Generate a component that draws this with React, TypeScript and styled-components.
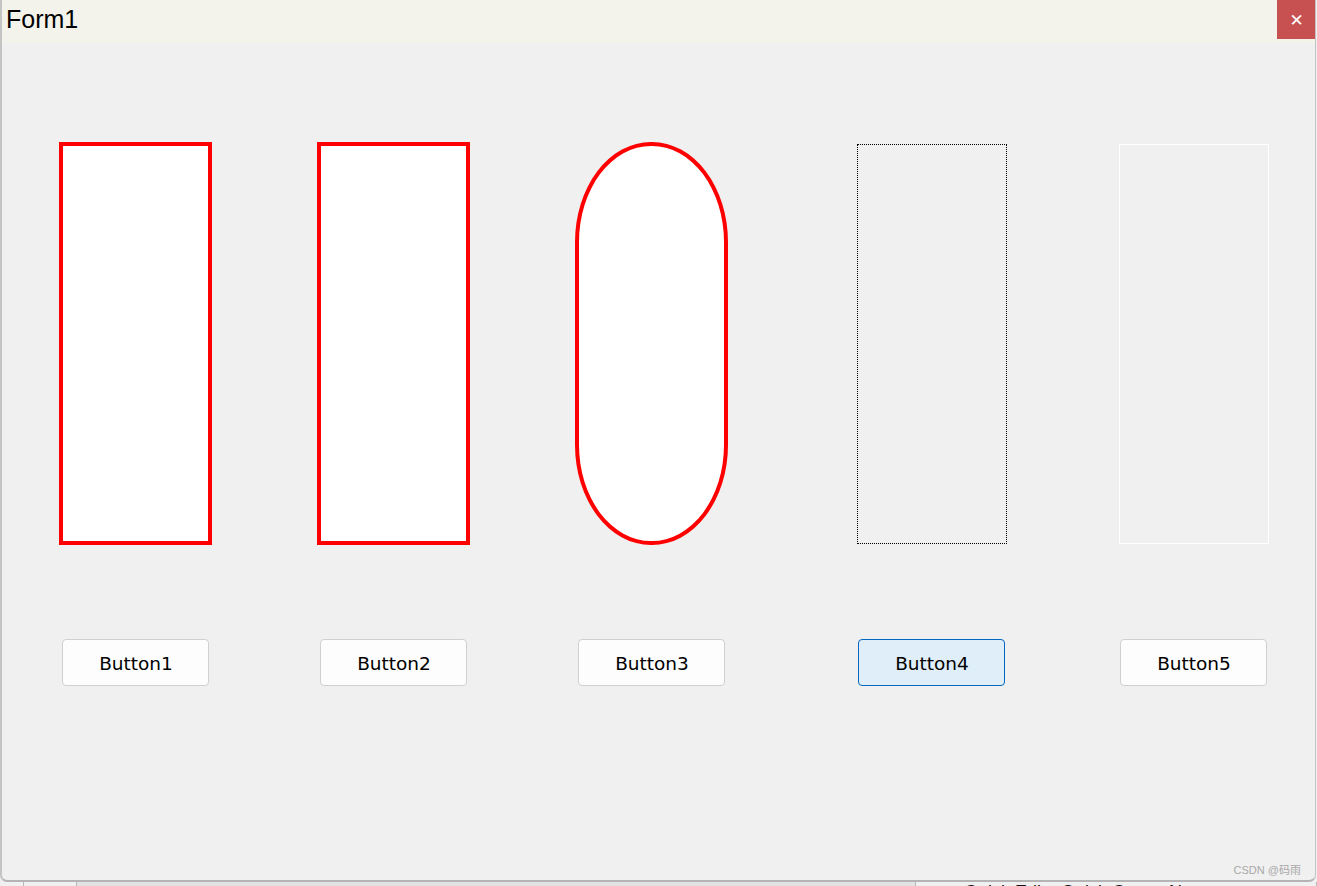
import React from 'react';
import styled, { createGlobalStyle, css } from 'styled-components';

const GlobalStyle = createGlobalStyle`
  html, body {
    margin: 0;
    padding: 0;
    overflow: hidden;
    background-color: #f0f0f0;
  }
`;

const Screen = styled.div`
  width: 1317px;
  height: 886px;
  display: flex;
  flex-direction: column;
  overflow: hidden;
`;

const Window = styled.div`
  width: 1316px;
  height: 882px;
  flex-shrink: 0;
  box-sizing: border-box;
  display: flex;
  flex-direction: column;
  border-left: 2px solid #c4c4c4;
  border-right: 1px solid #c4c4c4;
  border-bottom: 2px solid #b4b4b4;
  border-radius: 0 0 7px 7px;
  overflow: hidden;
  background-color: #f0f0f0;
`;

const TitleBar = styled.div`
  height: 43px;
  flex-shrink: 0;
  display: flex;
  justify-content: space-between;
  align-items: flex-start;
  background-color: #f3f3eb;
`;

const Title = styled.span`
  font-family: 'Liberation Sans', 'Noto Sans', sans-serif;
  font-size: 25px;
  line-height: 38px;
  color: #000;
  padding-left: 4px;
`;

const CloseButton = styled.div`
  width: 39px;
  height: 39px;
  margin-right: -1px;
  display: flex;
  align-items: center;
  justify-content: center;
  background-color: #c75050;
  color: #fff;
  font-family: 'DejaVu Sans', sans-serif;
  font-size: 17px;
  font-weight: bold;
`;

const Body = styled.div`
  flex: 1;
  position: relative;
  display: flex;
  align-items: flex-start;
  padding-top: 101px;
`;

const Column = styled.div<{ $offset: number }>`
  width: 150px;
  margin-left: ${({ $offset }) => $offset}px;
  display: flex;
  flex-direction: column;
`;

const ShapeSlot = styled.div`
  width: 150px;
  height: 400px;
`;

type ShapeKind = 'rect' | 'pill' | 'dotted' | 'plain';

const Shape = styled.div<{ $kind: ShapeKind }>`
  box-sizing: border-box;
  ${({ $kind }) =>
    $kind === 'rect' &&
    css`
      width: 153px;
      height: 403px;
      margin: -2px 0 0 -2px;
      border: 4px solid #ff0000;
      background-color: #fff;
    `}
  ${({ $kind }) =>
    $kind === 'pill' &&
    css`
      width: 153px;
      height: 403px;
      margin: -2px 0 0 -2px;
      border: 4px solid #ff0000;
      border-radius: 76px / 100px;
      background-color: #fff;
    `}
  ${({ $kind }) =>
    $kind === 'dotted' &&
    css`
      width: 150px;
      height: 400px;
      border: 1px dotted #000;
    `}
  ${({ $kind }) =>
    $kind === 'plain' &&
    css`
      width: 150px;
      height: 400px;
      border: 1px solid #fff;
    `}
`;

const FormButton = styled.button<{ $focused?: boolean }>`
  width: 147px;
  height: 47px;
  margin: 95px 0 0 1px;
  padding: 0 0 0 1px;
  box-sizing: border-box;
  border-radius: 4px;
  border: 1px solid ${({ $focused }) => ($focused ? '#0067c0' : '#d0d0d0')};
  background-color: ${({ $focused }) => ($focused ? '#e0eef9' : '#fdfdfd')};
  font-family: 'DejaVu Sans', 'Liberation Sans', sans-serif;
  font-size: 18.5px;
  line-height: 47px;
  color: #000;
`;

const Watermark = styled.span`
  position: absolute;
  right: 14px;
  bottom: 3px;
  font-family: 'Liberation Sans', 'Noto Sans CJK SC', sans-serif;
  font-size: 11px;
  color: #a8a8a8;
`;

const Strip = styled.div`
  flex: 1;
  min-height: 0;
  display: flex;
  overflow: hidden;
  background-color: #f0f0f0;
`;

const StripCell = styled.div<{ $width: number; $shade?: boolean }>`
  width: ${({ $width }) => $width}px;
  flex-shrink: 0;
  border-right: 1px solid #b8b8b8;
  background-color: ${({ $shade }) => ($shade ? '#e2e2e2' : '#f0f0f0')};
  overflow: hidden;
`;

const StripText = styled.div`
  font-family: 'Liberation Sans', sans-serif;
  font-size: 18px;
  color: #111;
  padding: 0 0 0 48px;
  white-space: pre;
`;

const columns: { label: string; kind: ShapeKind; offset: number; focused?: boolean }[] = [
  { label: 'Button1', kind: 'rect', offset: 59 },
  { label: 'Button2', kind: 'rect', offset: 108 },
  { label: 'Button3', kind: 'pill', offset: 108 },
  { label: 'Button4', kind: 'dotted', offset: 130, focused: true },
  { label: 'Button5', kind: 'plain', offset: 112 },
];

const App: React.FC = () => {
  return (
    <>
      <GlobalStyle />
      <Screen>
        <Window>
          <TitleBar>
            <Title>Form1</Title>
            <CloseButton>✕</CloseButton>
          </TitleBar>
          <Body>
            {columns.map((col) => (
              <Column key={col.label} $offset={col.offset}>
                <ShapeSlot>
                  <Shape $kind={col.kind} />
                </ShapeSlot>
                <FormButton $focused={col.focused}>{col.label}</FormButton>
              </Column>
            ))}
            <Watermark>CSDN @码雨</Watermark>
          </Body>
        </Window>
        <Strip>
          <StripCell $width={23} />
          <StripCell $width={52} />
          <StripCell $width={838} $shade />
          <StripCell $width={400}>
            <StripText>Quick Edit   Quick Copy   N</StripText>
          </StripCell>
        </Strip>
      </Screen>
    </>
  );
};

export default App;
